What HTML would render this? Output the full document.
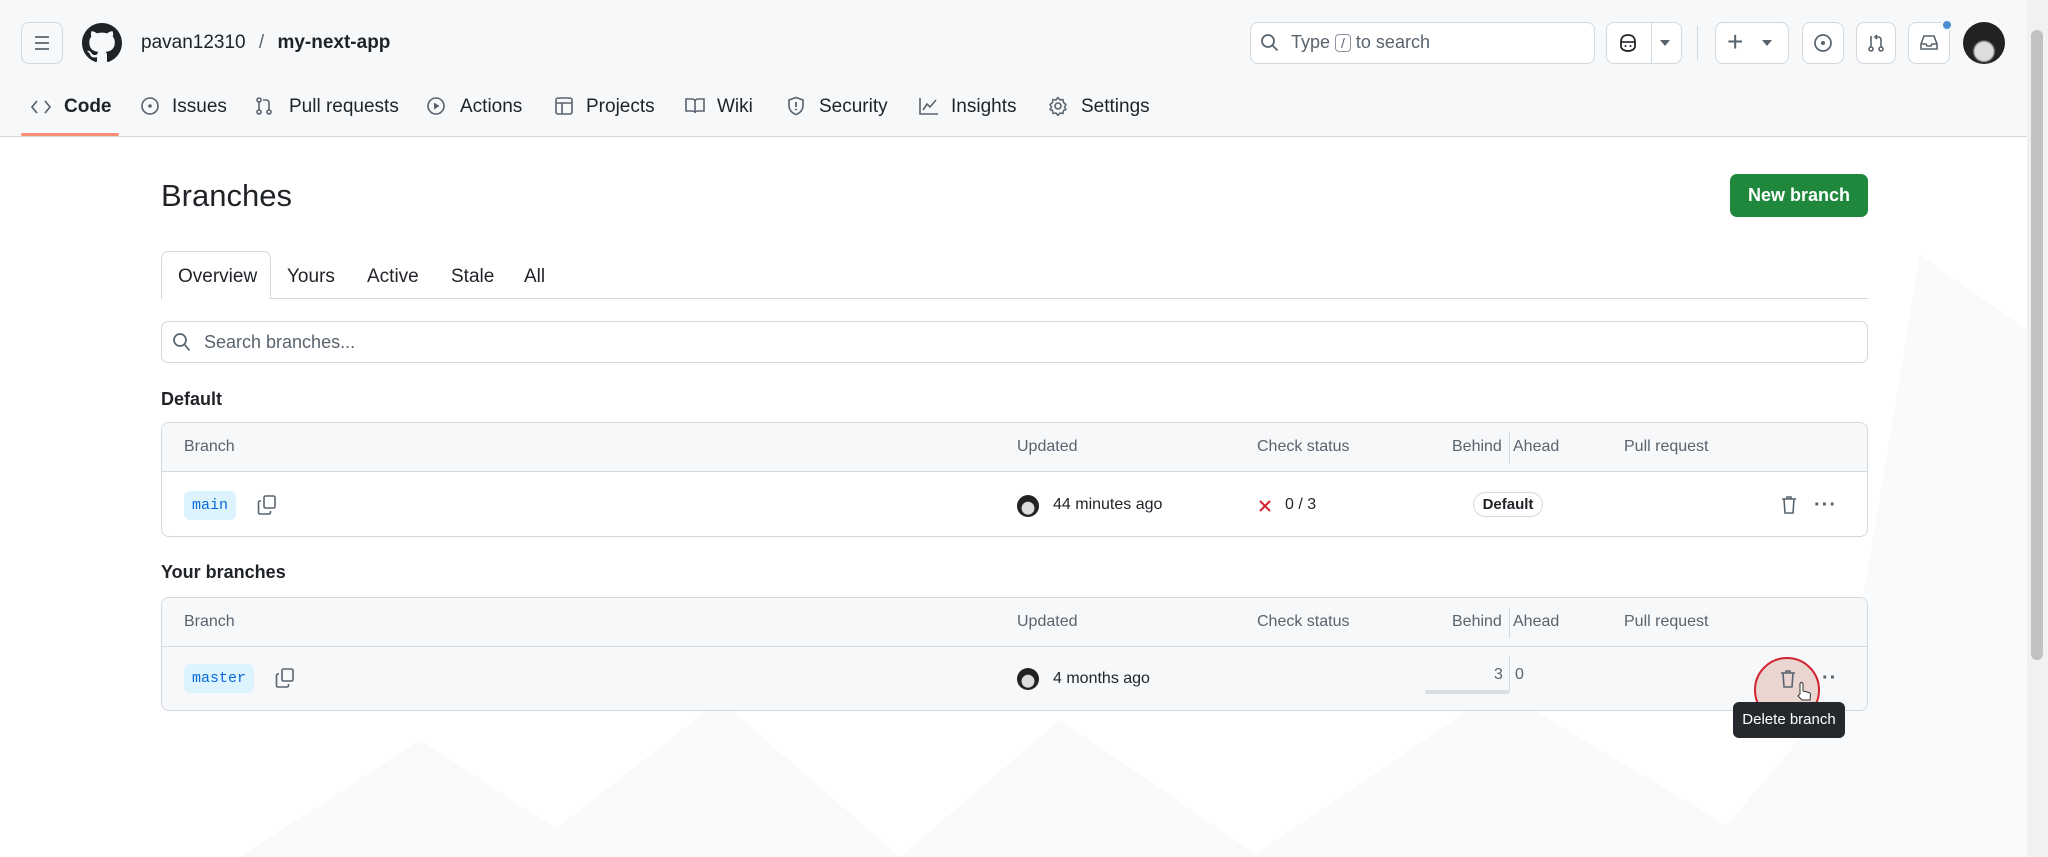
<!DOCTYPE html>
<html><head><meta charset="utf-8"><style>
*{box-sizing:border-box;margin:0;padding:0}
body{width:2048px;height:857px;overflow:hidden;background:#fff;font-family:"Liberation Sans",sans-serif;color:#1f2328;position:relative}
.a{position:absolute}
.hdr{left:0;top:0;width:2027px;height:137px;background:#f6f8fa;border-bottom:1px solid #d1d9e0}
.btn{position:absolute;border:1px solid #d1d9e0;border-radius:8px;background:#f6f8fa}
.nav{top:96px;font-size:19px;color:#1f2328;line-height:22px}
.ic{position:absolute;top:96px}
.th{font-size:16px;color:#59636e;top:0}
.tbl{position:absolute;left:161px;width:1707px;border:1px solid #d1d9e0;border-radius:8px;overflow:hidden;background:#fff}
.thr{position:absolute;left:0;top:0;width:100%;height:49px;background:#f6f8fa;border-bottom:1px solid #d1d9e0}
.cell{position:absolute;font-size:16px;line-height:20px}
.badge{position:absolute;background:#ddf4ff;color:#0969da;font-family:"Liberation Mono",monospace;font-size:15px;border-radius:6px;line-height:29px;padding:0 8px}
.av{position:absolute;width:22px;height:22px;border-radius:50%;background:radial-gradient(circle at 50% 60%,#ddd 0 35%,#222 40%)}
</style></head><body>
<svg class="a" style="left:0;top:0" width="2048" height="857">
<g fill="#f9fafb">
<polygon points="240,857 420,740 600,857"/><polygon points="520,857 720,700 900,857"/><polygon points="900,857 1060,720 1260,857"/><polygon points="1250,857 1500,690 1780,857"/><polygon points="1700,857 1900,620 2027,720 2027,857"/>
<polygon points="1820,857 1920,255 2027,330 2027,857"/>
</g></svg>
<div class="a hdr"></div>
<div class="a" style="left:2027px;top:0;width:21px;height:857px;background:#f1f1f1"></div>
<div class="a" style="left:2031px;top:30px;width:12px;height:630px;background:#c1c1c1;border-radius:6px"></div>
<div class="btn" style="left:21px;top:22px;width:42px;height:42px"></div>
<svg class="a" style="left:33px;top:34px" width="18" height="18"><path d="M2 3h14M2 9h14M2 15h14" stroke="#59636e" stroke-width="1.8"/></svg>
<svg class="a" style="left:82px;top:23px" width="40" height="40" viewBox="0 0 16 16"><path fill="#1f2328" d="M8 0C3.58 0 0 3.580 0 8c0 3.54 2.29 6.53 5.47 7.59.4.07.55-.17.55-.38 0-.19-.01-.82-.01-1.49-2.01.37-2.53-.49-2.69-.94-.09-.23-.48-.94-.82-1.13-.28-.15-.68-.52-.01-.53.63-.01 1.08.58 1.23.82.72 1.21 1.87.87 2.330.66.07-.52.28-.87.51-1.07-1.78-.2-3.64-.89-3.64-3.95 0-.87.31-1.590.82-2.15-.08-.2-.36-1.02.08-2.12 0 0 .67-.21 2.2.82.64-.18 1.32-.27 2-.27.68 0 1.36.09 2 .27 1.53-1.04 2.2-.82 2.2-.82.44 1.1.16 1.92.08 2.12.51.56.82 1.27.82 2.15 0 3.07-1.87 3.75-3.65 3.95.29.25.54.73.54 1.48 0 1.07-.01 1.93-.01 2.2 0 .21.15.46.55.38A8.013 8.013 0 0016 8c0-4.42-3.58-8-8-8z"/></svg>
<div class="a" style="left:141px;top:32px;font-size:19px;color:#1f2328">pavan12310 <span style="color:#59636e;margin:0 8px">/</span> <b style="font-weight:600">my-next-app</b></div>
<div class="btn" style="left:1250px;top:22px;width:345px;height:42px;background:#fff"></div>
<svg class="a" style="left:1260px;top:33px" width="20" height="20"><circle cx="8" cy="8" r="6" fill="none" stroke="#59636e" stroke-width="1.8"/><path d="M12.5 12.5l5 5" stroke="#59636e" stroke-width="1.8"/></svg>
<div class="a" style="left:1291px;top:32px;font-size:18px;color:#59636e">Type <span style="border:1px solid #8c959f;border-radius:4px;padding:0 5px;font-size:14px">/</span> to search</div>
<div class="btn" style="left:1606px;top:22px;width:76px;height:42px;background:#fff"></div>
<div class="a" style="left:1651px;top:22px;width:1px;height:42px;background:#d1d9e0"></div>
<svg class="a" style="left:1617px;top:32px" width="22" height="22" viewBox="0 0 22 22"><path d="M4 10c0-5 3-7 7-7s7 2 7 7v4c0 3-3 5-7 5s-7-2-7-5z" fill="none" stroke="#1f2328" stroke-width="1.8"/><path d="M4 10h14" stroke="#1f2328" stroke-width="1.6"/><circle cx="8.5" cy="14" r="1" fill="#1f2328"/><circle cx="13.5" cy="14" r="1" fill="#1f2328"/></svg>
<div class="a" style="left:1660px;top:40px;border:5px solid transparent;border-top:6px solid #59636e"></div>
<div class="a" style="left:1697px;top:26px;width:1px;height:34px;background:#d1d9e0"></div>
<div class="btn" style="left:1715px;top:22px;width:74px;height:42px;background:#fff"></div>
<div class="a" style="left:1727px;top:26px;font-size:28px;color:#59636e;font-weight:300">+</div>
<div class="a" style="left:1762px;top:40px;border:5px solid transparent;border-top:6px solid #59636e"></div>
<div class="btn" style="left:1802px;top:22px;width:42px;height:42px;background:#fff"></div>
<svg class="a" style="left:1813px;top:33px" width="20" height="20"><circle cx="10" cy="10" r="8" fill="none" stroke="#59636e" stroke-width="1.7"/><circle cx="10" cy="10" r="2" fill="#59636e"/></svg>
<div class="btn" style="left:1856px;top:22px;width:40px;height:42px;background:#fff"></div>
<svg class="a" style="left:1866px;top:33px" width="20" height="20"><circle cx="5" cy="16" r="2" fill="none" stroke="#59636e" stroke-width="1.6"/><circle cx="15" cy="16" r="2" fill="none" stroke="#59636e" stroke-width="1.6"/><path d="M5 3v11M15 14V7c0-2-1-3-3-3H9m2-2L9 4l2 2" stroke="#59636e" stroke-width="1.6" fill="none"/></svg>
<div class="btn" style="left:1908px;top:22px;width:42px;height:42px;background:#fff"></div>
<svg class="a" style="left:1919px;top:33px" width="20" height="20"><path d="M2 11l3-8h10l3 8v5H2zM2 11h5l1 2h4l1-2h5" fill="none" stroke="#59636e" stroke-width="1.6"/></svg>
<div class="a" style="left:1941px;top:19px;width:12px;height:12px;border-radius:50%;background:#4d8fd1;border:2px solid #f6f8fa"></div>
<div class="a" style="left:1963px;top:22px;width:42px;height:42px;border-radius:50%;background:radial-gradient(circle at 50% 70%,#ddd 0 25%,#222 32%)"></div>

<svg class="ic" style="left:30px;top:97px" width="22" height="20"><path d="M7 4L2 10l5 6M15 4l5 6-5 6" fill="none" stroke="#59636e" stroke-width="1.7"/></svg>
<div class="a nav" style="left:64px;font-weight:700">Code</div>
<div class="a" style="left:21px;top:133px;width:98px;height:3px;background:#fd8c73;border-radius:2px"></div>
<svg class="ic" style="left:140px" width="20" height="20"><circle cx="10" cy="10" r="8" fill="none" stroke="#59636e" stroke-width="1.6"/><circle cx="10" cy="10" r="1.8" fill="#59636e"/></svg>
<div class="a nav" style="left:172px">Issues</div>
<svg class="ic" style="left:254px" width="20" height="20"><circle cx="5" cy="16" r="2" fill="none" stroke="#59636e" stroke-width="1.6"/><circle cx="15" cy="16" r="2" fill="none" stroke="#59636e" stroke-width="1.6"/><circle cx="5" cy="4" r="2" fill="none" stroke="#59636e" stroke-width="1.6"/><path d="M5 6v8M15 14V7c0-2-1-3-3-3H9" stroke="#59636e" stroke-width="1.6" fill="none"/></svg>
<div class="a nav" style="left:289px">Pull requests</div>
<svg class="ic" style="left:426px" width="20" height="20"><circle cx="10" cy="10" r="8" fill="none" stroke="#59636e" stroke-width="1.6"/><path d="M8 6.5v7l5.5-3.5z" fill="#59636e"/></svg>
<div class="a nav" style="left:460px">Actions</div>
<svg class="ic" style="left:554px" width="20" height="20"><rect x="2" y="2" width="16" height="16" rx="2" fill="none" stroke="#59636e" stroke-width="1.6"/><path d="M2 7h16M8 7v11" stroke="#59636e" stroke-width="1.6"/></svg>
<div class="a nav" style="left:586px">Projects</div>
<svg class="ic" style="left:684px" width="22" height="20"><path d="M2 3h6c2 0 3 1 3 3v11c0-1-1-2-3-2H2zM20 3h-6c-2 0-3 1-3 3v11c0-1 1-2 3-2h6z" fill="none" stroke="#59636e" stroke-width="1.6"/></svg>
<div class="a nav" style="left:717px">Wiki</div>
<svg class="ic" style="left:786px" width="20" height="20"><path d="M10 1.5L3 4v5c0 5 3 8 7 9.5 4-1.5 7-4.5 7-9.5V4z" fill="none" stroke="#59636e" stroke-width="1.6"/><path d="M10 6v5" stroke="#59636e" stroke-width="1.8"/><circle cx="10" cy="13.5" r="1" fill="#59636e"/></svg>
<div class="a nav" style="left:819px">Security</div>
<svg class="ic" style="left:918px" width="22" height="20"><path d="M2 2v16h18M5 14l4-6 3 3 6-7" fill="none" stroke="#59636e" stroke-width="1.6"/></svg>
<div class="a nav" style="left:951px">Insights</div>
<svg class="ic" style="left:1048px" width="20" height="20"><circle cx="10" cy="10" r="3" fill="none" stroke="#59636e" stroke-width="1.6"/><path d="M10 1.5l2 2.5 3-.5.5 3 2.5 2-1.5 2.5 1.5 2.5-2.5 1-.5 3-3-.5-2 2.5-2-2.5-3 .5-.5-3-2.5-1L3.5 11 2 8.5l2.5-2 .5-3 3 .5z" fill="none" stroke="#59636e" stroke-width="1.5" stroke-linejoin="round"/></svg>
<div class="a nav" style="left:1081px">Settings</div>

<div class="a" style="left:161px;top:178px;font-size:31px;color:#1f2328">Branches</div>
<div class="a" style="left:1730px;top:174px;width:138px;height:43px;background:#1f883d;border-radius:7px;color:#fff;font-size:18px;font-weight:700;text-align:center;line-height:43px">New branch</div>

<div class="a" style="left:161px;top:298px;width:1707px;height:1px;background:#d1d9e0"></div>
<div class="a" style="left:161px;top:251px;width:110px;height:48px;border:1px solid #d1d9e0;border-bottom:none;border-radius:7px 7px 0 0;background:#fff"></div>
<div class="a" style="left:178px;top:266px;font-size:19px">Overview</div>
<div class="a" style="left:287px;top:266px;font-size:19px">Yours</div>
<div class="a" style="left:367px;top:266px;font-size:19px">Active</div>
<div class="a" style="left:451px;top:266px;font-size:19px">Stale</div>
<div class="a" style="left:524px;top:266px;font-size:19px">All</div>

<div class="a" style="left:161px;top:321px;width:1707px;height:42px;border:1px solid #d1d9e0;border-radius:7px;background:#fff"></div>
<svg class="a" style="left:172px;top:332px" width="20" height="22"><circle cx="8" cy="8" r="6" fill="none" stroke="#59636e" stroke-width="1.7"/><path d="M12.5 12.5l5 6" stroke="#59636e" stroke-width="1.7"/></svg>
<div class="a" style="left:204px;top:332px;font-size:18px;color:#59636e">Search branches...</div>

<div class="a" style="left:161px;top:389px;font-size:18px;font-weight:700">Default</div>
<div class="tbl" style="top:422px;height:115px">
 <div class="thr"></div>
 <div class="cell th" style="left:22px;top:14px">Branch</div>
 <div class="cell th" style="left:855px;top:14px">Updated</div>
 <div class="cell th" style="left:1095px;top:14px">Check status</div>
 <div class="cell th" style="left:1290px;top:14px">Behind</div>
 <div class="a" style="left:1347px;top:10px;width:1px;height:30px;background:#d1d9e0"></div>
 <div class="cell th" style="left:1351px;top:14px">Ahead</div>
 <div class="cell th" style="left:1462px;top:14px">Pull request</div>
 <div class="badge" style="left:22px;top:68px">main</div>
 <svg class="a" style="left:94px;top:71px" width="22" height="22"><rect x="8" y="2" width="11" height="12" rx="1.5" fill="none" stroke="#59636e" stroke-width="1.6"/><path d="M5 7H4a1.5 1.5 0 00-1.5 1.5v10A1.5 1.5 0 004 20h9a1.5 1.5 0 001.5-1.5V17" fill="none" stroke="#59636e" stroke-width="1.6"/></svg>
 <div class="av" style="left:855px;top:72px"></div>
 <div class="cell" style="left:891px;top:72px">44 minutes ago</div>
 <svg class="a" style="left:1096px;top:76px" width="14" height="14"><path d="M2 2l10 10M12 2L2 12" stroke="#d1242f" stroke-width="2"/></svg>
 <div class="cell" style="left:1123px;top:72px">0 / 3</div>
 <div class="a" style="left:1311px;top:69px;width:70px;height:25px;border:1px solid #d1d9e0;border-radius:13px;font-size:15px;font-weight:600;text-align:center;line-height:23px">Default</div>
 <svg class="a" style="left:1618px;top:71px" width="18" height="22"><path d="M2 5h14M7 5V3h4v2M4 5l1 14h8l1-14" fill="none" stroke="#59636e" stroke-width="1.6"/></svg>
 <div class="cell" style="left:1652px;top:72px;font-size:20px;color:#59636e;font-weight:700;letter-spacing:1px">···</div>
</div>

<div class="a" style="left:161px;top:562px;font-size:18px;font-weight:700">Your branches</div>
<div class="tbl" style="top:597px;height:114px">
 <div class="thr"></div>
 <div class="a" style="left:0;top:49px;width:100%;height:65px;background:#f6f8fa"></div>
 <div class="cell th" style="left:22px;top:14px">Branch</div>
 <div class="cell th" style="left:855px;top:14px">Updated</div>
 <div class="cell th" style="left:1095px;top:14px">Check status</div>
 <div class="cell th" style="left:1290px;top:14px">Behind</div>
 <div class="a" style="left:1347px;top:10px;width:1px;height:30px;background:#d1d9e0"></div>
 <div class="a" style="left:1347px;top:58px;width:1px;height:36px;background:#d1d9e0"></div>
 <div class="cell th" style="left:1351px;top:14px">Ahead</div>
 <div class="cell th" style="left:1462px;top:14px">Pull request</div>
 <div class="badge" style="left:22px;top:66px">master</div>
 <svg class="a" style="left:112px;top:69px" width="22" height="22"><rect x="8" y="2" width="11" height="12" rx="1.5" fill="none" stroke="#59636e" stroke-width="1.6"/><path d="M5 7H4a1.5 1.5 0 00-1.5 1.5v10A1.5 1.5 0 004 20h9a1.5 1.5 0 001.5-1.5V17" fill="none" stroke="#59636e" stroke-width="1.6"/></svg>
 <div class="av" style="left:855px;top:70px"></div>
 <div class="cell" style="left:891px;top:71px">4 months ago</div>
 <div class="cell" style="left:1332px;top:67px;color:#59636e">3</div>
 <div class="cell" style="left:1353px;top:67px;color:#59636e">0</div>
 <div class="a" style="left:1263px;top:92px;width:84px;height:4px;background:#d8dee4;border-radius:2px"></div>
 <div class="cell" style="left:1660px;top:70px;font-size:20px;color:#59636e;font-weight:700;letter-spacing:1px">··</div>
</div>
<div class="a" style="left:1754px;top:657px;width:66px;height:66px;border-radius:50%;border:2px solid #d1242f;background:rgba(220,170,160,.45)"></div>
<svg class="a" style="left:1779px;top:668px" width="18" height="22"><path d="M2 5h14M7 5V3h4v2M4 5l1 14h8l1-14" fill="none" stroke="#59636e" stroke-width="1.6"/></svg>
<div class="a" style="left:1733px;top:702px;width:112px;height:36px;background:#25292e;border-radius:6px;color:#fff;font-size:15px;text-align:center;line-height:36px">Delete branch</div>
<svg class="a" style="left:1795px;top:680px" width="18" height="24"><path d="M5 14V4a1.5 1.5 0 013 0v7l6 1.5c1 .3 1.5 1 1.5 2L15 20H7l-4-4 1-1z" fill="#fff" stroke="#333" stroke-width="1"/></svg>
</body></html>
